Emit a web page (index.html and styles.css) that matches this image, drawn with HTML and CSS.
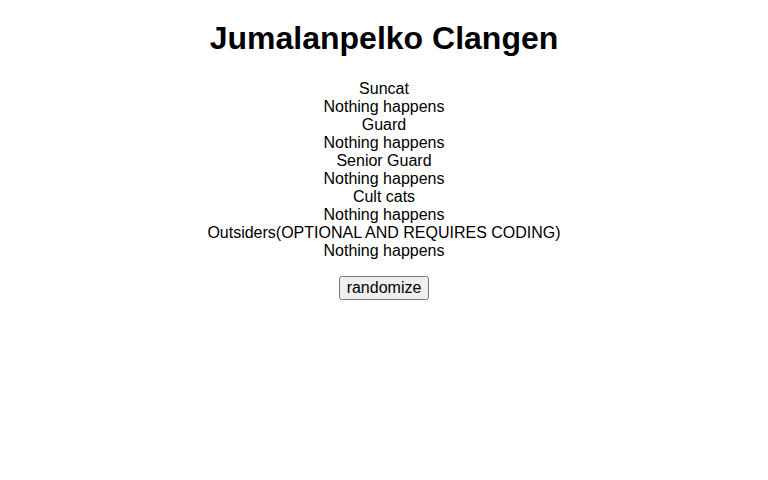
FILE: index.html
```html
<!DOCTYPE html>
<html lang="en">
<head>
  <meta charset="UTF-8" />
  <meta name="viewport" content="width=device-width, initial-scale=1.0" />
  <title>Jumalanpelko Clangen</title>
  <link rel="stylesheet" href="styles.css">
</head>
<body>
  <h1>Jumalanpelko Clangen</h1>

  <div class="roles">
    <div>Suncat</div>
    <div id="suncat">Nothing happens</div>
    <div>Guard</div>
    <div id="guard">Nothing happens</div>
    <div>Senior Guard</div>
    <div id="senior">Nothing happens</div>
    <div>Cult cats</div>
    <div id="cult">Nothing happens</div>
    <div>Outsiders(OPTIONAL AND REQUIRES CODING)</div>
    <div id="outsiders">Nothing happens</div>
  </div>

  <p class="actions">
    <button onclick="randomize()">randomize</button>
  </p>

  <script>
    const events = [
      "Nothing happens",
      "Goes hunting",
      "Gets injured",
      "Finds herbs",
      "Has a strange dream",
      "Argues with a clanmate"
    ];

    function pick() {
      return events[Math.floor(Math.random() * events.length)];
    }

    function randomize() {
      ["suncat", "guard", "senior", "cult", "outsiders"].forEach(id => {
        document.getElementById(id).innerText = pick();
      });
    }
  </script>
</body>
</html>
```

FILE: styles.css
```css
body {
  font-family: 'Liberation Sans', Arial, sans-serif;
  margin: 8px;
  text-align: center;
  color: #000;
  background: #fff;
}
h1 {
  font-size: 32px;
  margin: 12px 0 23px;
}
.roles {
  font-size: 16px;
  line-height: 18px;
}
.actions {
  margin: 16px 0;
}
.actions button {
  font-family: 'Liberation Sans', Arial, sans-serif;
  font-size: 16px;
}
```
